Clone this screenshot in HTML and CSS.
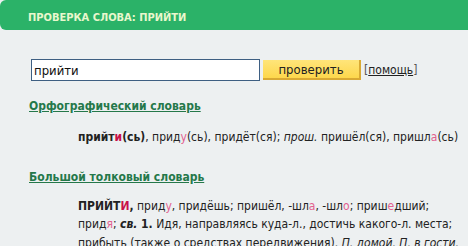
FILE: index.html
```html
<!DOCTYPE html>
<html lang="ru">
<head>
<meta charset="utf-8">
<title>Проверка слова: прийти</title>
<link rel="stylesheet" href="styles.css">
</head>
<body>
<div class="header">ПРОВЕРКА СЛОВА: ПРИЙТИ</div>
<div class="search">
  <input class="field" type="text" value="прийти">
  <button class="btn">проверить</button>
  <span class="help">[<a href="#">помощь</a>]</span>
</div>
<div class="section first">
  <a class="dict" href="#">Орфографический словарь</a>
  <p class="entry"><b>прийт<span class="st">и</span>(сь)</b>, прид<span class="sl">у</span>(сь), придёт(ся); <i>прош.</i> пришёл(ся), пришл<span class="sl">а</span>(сь)</p>
</div>
<div class="section second">
  <a class="dict" href="#">Большой толковый словарь</a>
  <p class="entry para"><b>ПРИЙТ<span class="st">И</span>,</b> прид<span class="sl">у</span>, придёшь; пришёл, -шл<span class="sl">а</span>, -шл<span class="sl">о</span>; приш<span class="sl">е</span>дший; прид<span class="sl">я</span>; <b><i>св.</i> 1.</b> Идя, направляясь куда-л., достичь какого-л. места; прибыть (также о средствах передвижения). <i>П. домой. П. в гости.</i></p>
</div>
</body>
</html>
```
FILE: styles.css
```css
html, body {
  margin: 0;
  padding: 0;
  background: #edf0f1;
}
body {
  font-family: "DejaVu Sans Condensed", "DejaVu Sans", sans-serif;
  font-size: 13px;
  color: #222;
  overflow: hidden;
}
.header {
  height: 30px;
  box-sizing: border-box;
  padding: 4px 0 0 28px;
  display: flex;
  align-items: center;
  background: #2bb268;
  border-radius: 6px 0 0 6px;
  color: #e9f7cd;
  font-weight: bold;
  font-size: 11px;
}
.search {
  display: flex;
  align-items: center;
  margin: 29px 0 0 31px;
}
.field {
  width: 229px;
  height: 22px;
  box-sizing: border-box;
  border: 1px solid #3e5f82;
  background: #fff;
  padding: 0 2px;
  font-family: inherit;
  font-size: 13px;
  color: #111;
  outline: none;
}
.btn {
  margin-left: 3px;
  width: 98px;
  height: 20px;
  box-sizing: border-box;
  border: none;
  border-right: 2px solid #d9a933;
  border-bottom: 2px solid #d9a933;
  background: linear-gradient(#ffe57a, #fdd74c);
  font-family: inherit;
  font-size: 13px;
  color: #222;
  padding: 0;
}
.help {
  margin-left: 3px;
  font-size: 12px;
  color: #555;
}
.help a {
  color: #222;
}
.section {
  margin-left: 29px;
  font-size: 12px;
}
.first {
  margin-top: 17px;
}
.second {
  margin-top: 22px;
}
.dict {
  display: block;
  color: #25784a;
  font-weight: bold;
  text-decoration: underline;
  line-height: 16px;
}
.entry {
  margin: 14px 0 0 49px;
  padding-right: 4px;
  line-height: 18.5px;
  color: #222;
}
.para {
  margin-top: 12px;
}
.st {
  color: #c8104a;
}
.sl {
  color: #e2608f;
}
```
